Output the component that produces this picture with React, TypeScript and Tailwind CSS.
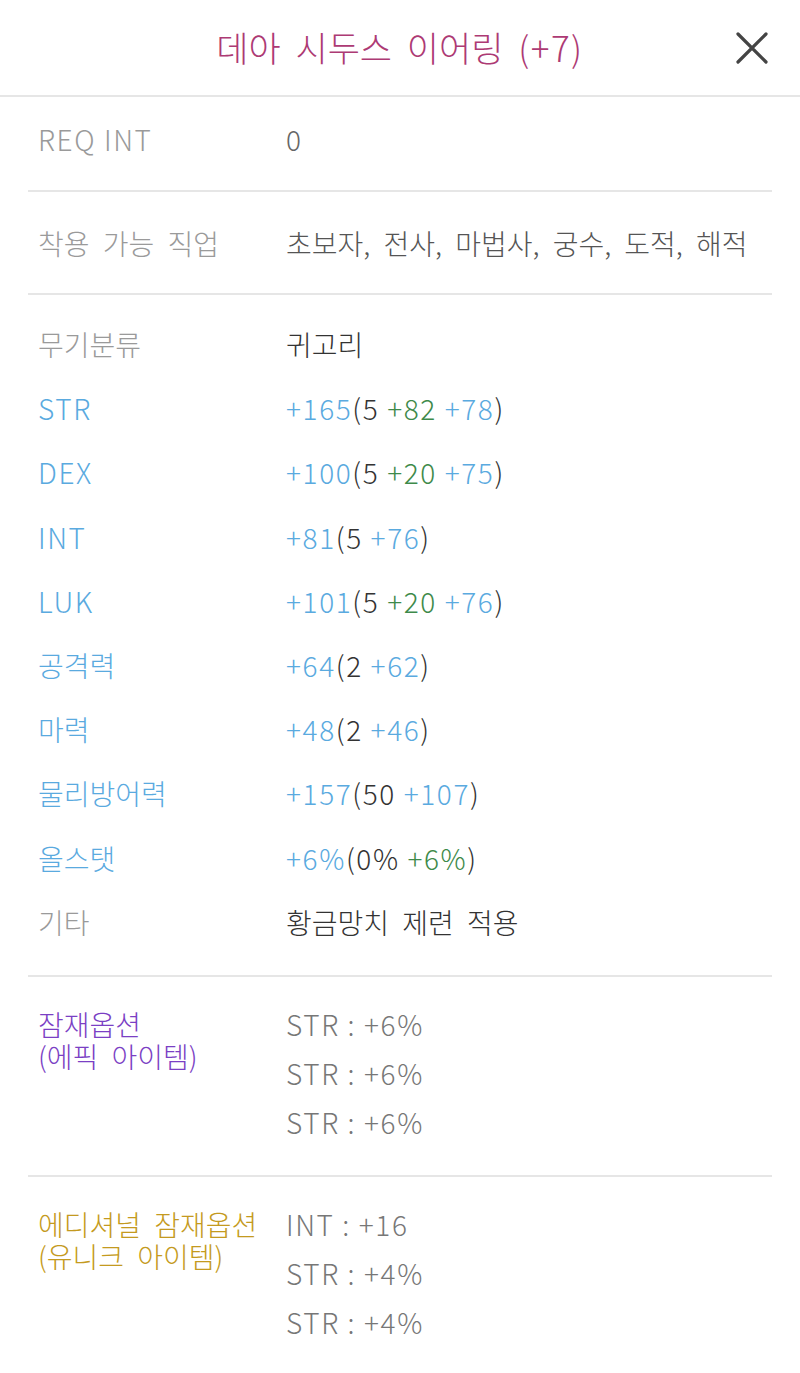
import React from "react";

const B = "text-[#5aaadf]";
const G = "text-[#3e8a4a]";
const D = "text-[#333333]";
const L = "tracking-[1.6px] [word-spacing:0px]";

type Part = [string, string];

function Row({ label, labelCls, children }: { label: string; labelCls: string; children: React.ReactNode }) {
  return (
    <div className="flex h-[64.2px] items-center">
      <div className={`w-[248px] shrink-0 ${labelCls}`}>{label}</div>
      <div className="flex-1">{children}</div>
    </div>
  );
}

function Parts({ parts }: { parts: Part[] }) {
  return (
    <span className={L}>
      {parts.map((p, i) => (
        <span key={i} className={p[1]}>
          {p[0]}
        </span>
      ))}
    </span>
  );
}

export default function App() {
  const font = { fontFamily: "'Noto Sans CJK KR', 'Noto Sans', sans-serif", wordSpacing: "7px" };
  const stats: { label: string; parts: Part[]; latin?: boolean }[] = [
    { label: "STR", latin: true, parts: [["+165", B], ["(5 ", D], ["+82", G], [" ", D], ["+78", B], [")", D]] },
    { label: "DEX", latin: true, parts: [["+100", B], ["(5 ", D], ["+20", G], [" ", D], ["+75", B], [")", D]] },
    { label: "INT", latin: true, parts: [["+81", B], ["(5 ", D], ["+76", B], [")", D]] },
    { label: "LUK", latin: true, parts: [["+101", B], ["(5 ", D], ["+20", G], [" ", D], ["+76", B], [")", D]] },
    { label: "공격력", parts: [["+64", B], ["(2 ", D], ["+62", B], [")", D]] },
    { label: "마력", parts: [["+48", B], ["(2 ", D], ["+46", B], [")", D]] },
    { label: "물리방어력", parts: [["+157", B], ["(50 ", D], ["+107", B], [")", D]] },
    { label: "올스탯", parts: [["+6%", B], ["(0% ", D], ["+6%", G], [")", D]] },
  ];
  return (
    <div className="min-h-[1373px] w-[800px] bg-white text-[28px] font-light" style={font}>
      <div className="relative flex h-[97px] items-center justify-center border-b-2 border-[#e6e6e6]">
        <div className="pb-[2px] text-[35px] leading-none text-[#ad3a74]">
          데아 시두스 이어링 <span className="tracking-[1.5px]">(+7)</span>
        </div>
        <button className="absolute right-[32px] top-[32px] h-[32px] w-[32px]">
          <svg viewBox="0 0 32 32" className="h-[32px] w-[32px]">
            <path d="M2 2 L30 30 M30 2 L2 30" stroke="#444" strokeWidth="3.2" strokeLinecap="round" fill="none" />
          </svg>
        </button>
      </div>
      <div className="px-[28px]">
        <div className="flex items-center border-b-2 border-[#e6e6e6] px-[10px] pt-[22px] pb-[31px] leading-[40px]">
          <div className={`w-[248px] text-[#9a9a9a] ${L}`}>REQ INT</div>
          <div className={`text-[#666] ${L}`}>0</div>
        </div>
        <div className="flex items-center border-b-2 border-[#e6e6e6] px-[10px] pt-[31px] pb-[30px] leading-[40px]">
          <div className="w-[248px] text-[#9a9a9a]">착용 가능 직업</div>
          <div className="text-[#555]">초보자, 전사, 마법사, 궁수, 도적, 해적</div>
        </div>
        <div className="border-b-2 border-[#e6e6e6] px-[10px] pt-[17px] pb-[21px]">
          <Row label="무기분류" labelCls="text-[#9a9a9a]">
            <span className="text-[#333]">귀고리</span>
          </Row>
          {stats.map((s) => (
            <Row key={s.label} label={s.label} labelCls={`${B} ${s.latin ? L : ""}`}>
              <Parts parts={s.parts} />
            </Row>
          ))}
          <Row label="기타" labelCls="text-[#9a9a9a]">
            <span className="text-[#333]">황금망치 제련 적용</span>
          </Row>
        </div>
        <div className="flex border-b-2 border-[#e6e6e6] px-[10px] pt-[23px] pb-[28px]">
          <div className="mt-[8px] w-[248px] shrink-0 leading-[32px] text-[#7b3fc4]">
            <div>잠재옵션</div>
            <div>(에픽 아이템)</div>
          </div>
          <div className={`flex flex-col text-[#777] ${L}`}>
            <div className="h-[49px] leading-[49px]">STR : +6%</div>
            <div className="h-[49px] leading-[49px]">STR : +6%</div>
            <div className="h-[49px] leading-[49px]">STR : +6%</div>
          </div>
        </div>
        <div className="flex px-[10px] pt-[23px] pb-[26px]">
          <div className="mt-[8px] w-[248px] shrink-0 leading-[32px] text-[#c49a20]">
            <div className="whitespace-nowrap">에디셔널 잠재옵션</div>
            <div>(유니크 아이템)</div>
          </div>
          <div className={`flex flex-col text-[#777] ${L}`}>
            <div className="h-[49px] leading-[49px]">INT : +16</div>
            <div className="h-[49px] leading-[49px]">STR : +4%</div>
            <div className="h-[49px] leading-[49px]">STR : +4%</div>
          </div>
        </div>
      </div>
    </div>
  );
}
